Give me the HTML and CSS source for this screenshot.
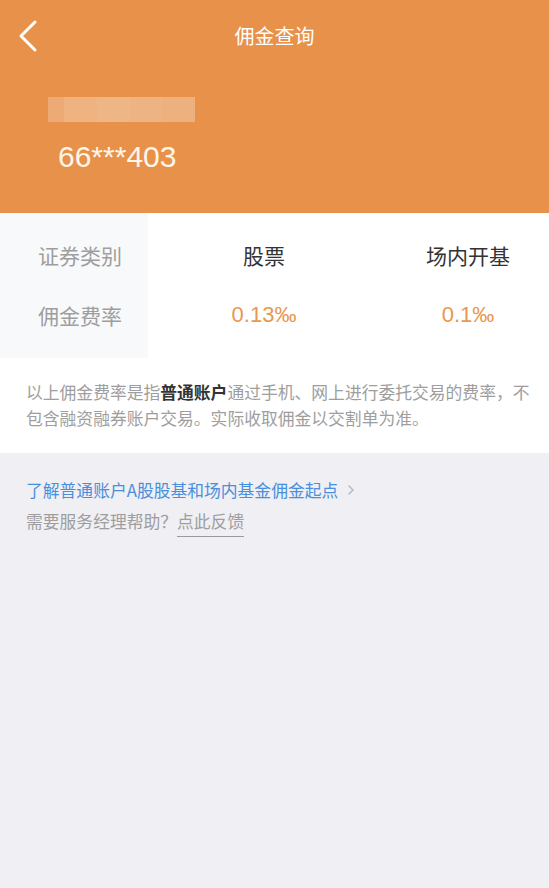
FILE: index.html
```html
<!DOCTYPE html>
<html lang="zh-CN">
<head>
<meta charset="utf-8">
<title>佣金查询</title>
<link rel="stylesheet" href="styles.css">
</head>
<body>
<div class="page">
  <header class="hero">
    <div class="nav">
      <svg class="back" width="24" height="34" viewBox="0 0 24 34" aria-hidden="true">
        <polyline points="17,3 3,17 17,31" fill="none" stroke="#ffffff" stroke-width="3" stroke-linecap="round" stroke-linejoin="round"/>
      </svg>
      <div class="title">佣金查询</div>
    </div>
    <div class="account">
      <div class="name-blur">
        <span class="b1"></span><span class="b2"></span><span class="b3"></span><span class="b4"></span><span class="b5"></span>
      </div>
      <div class="acct-no">66***403</div>
    </div>
  </header>

  <section class="table">
    <div class="col head-col">
      <div class="cell label">证券类别</div>
      <div class="cell label">佣金费率</div>
    </div>
    <div class="col col-stock">
      <div class="cell type">股票</div>
      <div class="cell rate">0.13‰</div>
    </div>
    <div class="col col-fund">
      <div class="cell type">场内开基</div>
      <div class="cell rate">0.1‰</div>
    </div>
  </section>

  <section class="note">
    <p>以上佣金费率是指<b>普通账户</b>通过手机、网上进行委托交易的费率，不<br>包含融资融券账户交易。实际收取佣金以交割单为准。</p>
  </section>

  <section class="extra">
    <div class="link">了解普通账户A股股基和场内基金佣金起点<svg class="chev" width="10" height="14" viewBox="0 0 10 14" aria-hidden="true"><polyline points="3,3 7,7 3,11" fill="none" stroke="#a9b9d0" stroke-width="1.4" stroke-linecap="round" stroke-linejoin="round"/></svg></div>
    <div class="help">需要服务经理帮助？<span class="feedback">点此反馈</span></div>
  </section>
</div>
</body>
</html>
```

FILE: styles.css
```css
html, body {
  margin: 0;
  padding: 0;
}
body {
  background: #efeff4;
  font-family: "Noto Sans CJK SC", "Noto Sans", "Liberation Sans", sans-serif;
}
.page {
  width: 549px;
  min-height: 888px;
  background: #efeff4;
}
.hero {
  height: 213px;
  background: #e8914a;
  box-sizing: border-box;
}
.nav {
  height: 74px;
  display: flex;
  align-items: center;
  justify-content: center;
  position: relative;
}
.back {
  position: absolute;
  left: 18px;
  top: 19px;
}
.title {
  color: #ffffff;
  font-size: 20px;
  line-height: 28px;
  margin-top: -2px;
}
.account {
  padding: 23px 0 0 48px;
}
.name-blur {
  display: flex;
  width: 147px;
  height: 25px;
}
.name-blur span { flex: 1; height: 100%; }
.name-blur .b1 { background: #ecaa77; flex: 0.5; }
.name-blur .b2 { background: #eeb381; }
.name-blur .b3 { background: #efb685; }
.name-blur .b4 { background: #eeb382; }
.name-blur .b5 { background: #edb17f; }
.acct-no {
  margin: 20px 0 0 10px;
  color: #fff6ea;
  font-family: "Liberation Sans", "Noto Sans", sans-serif;
  font-size: 30px;
  line-height: 30px;
}
.table {
  display: grid;
  grid-template-columns: 148px 232px 1fr;
  background: #ffffff;
  height: 145px;
}
.col {
  padding: 12px 0 13px;
  display: flex;
  flex-direction: column;
}
.head-col {
  background: #f8f9fb;
  padding-left: 12px;
}
.col-fund {
  padding-left: 7px;
}
.cell {
  height: 60px;
  display: flex;
  align-items: center;
  justify-content: center;
  font-size: 21px;
}
.label {
  color: #9e9e9e;
}
.type {
  color: #333333;
}
.rate {
  color: #e8984f;
  font-family: "Liberation Sans", "Noto Sans", sans-serif;
  font-size: 22px;
}
.note {
  background: #ffffff;
  padding: 21px 0 22px 26px;
}
.note p {
  margin: 0;
  font-size: 16.8px;
  line-height: 26px;
  color: #9e9e9e;
  white-space: nowrap;
}
.note b {
  color: #333333;
  font-weight: 700;
}
.extra {
  padding: 22px 0 0 26px;
}
.link {
  color: #4a8fdc;
  font-size: 16.8px;
  line-height: 30px;
  display: flex;
  align-items: center;
}
.chev {
  margin-left: 8px;
}
.help {
  color: #9e9e9e;
  font-size: 16.8px;
  line-height: 30px;
  margin-top: 1px;
}
.feedback {
  border-bottom: 1px solid #9a9a9a;
  padding-bottom: 3px;
}
```
